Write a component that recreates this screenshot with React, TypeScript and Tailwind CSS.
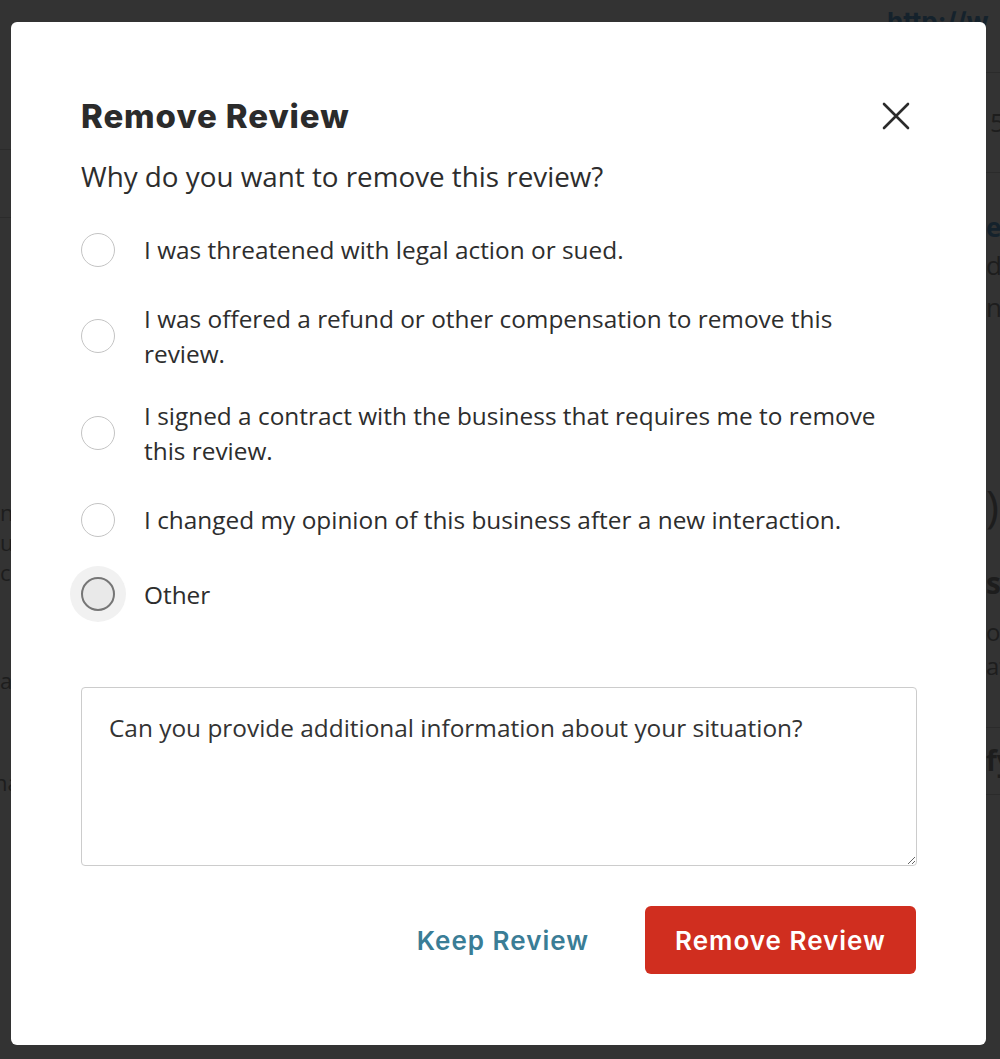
import React from "react";

const options: string[] = [
  "I was threatened with legal action or sued.",
  "I was offered a refund or other compensation to remove this review.",
  "I signed a contract with the business that requires me to remove this review.",
  "I changed my opinion of this business after a new interaction.",
];

const rowMargins = ["mt-0", "mt-[34px]", "mt-[27px]", "mt-[34px]"];

function Radio() {
  return (
    <span className="block w-[34px] h-[34px] shrink-0 rounded-full border-[1.5px] border-[#c4c4c4] bg-white" />
  );
}

function BackgroundPage() {
  return (
    <div className="flex justify-between h-full text-[#1d1d1d]">
      {/* left strip of the page behind */}
      <div className="w-[40px] flex flex-col">
        <div className="h-[150px] border-b border-[#2b2b2b]" />
        <div className="h-[68px] border-b border-[#2b2b2b]" />
        <div className="pt-[278px] flex flex-col text-[22px] leading-[32px]">
          <span>n</span>
          <span className="-mt-[2px]">u</span>
          <span className="-mt-[2px]">c</span>
          <span className="mt-[76px]">a</span>
          <span className="mt-[70px] -ml-[6px]">na</span>
        </div>
      </div>
      {/* right strip of the page behind */}
      <div className="w-[120px] flex flex-col">
        <div className="h-[73px] border-b border-[#2b2b2b] pl-[7px] pt-[2px]">
          <span className="text-[26px] font-bold text-[#15222c] [font-family:Inter,sans-serif] whitespace-nowrap">
            http://w
          </span>
        </div>
        <div className="h-[100px] border-b border-[#2b2b2b] pl-[110px] pt-[32px] text-[26px] leading-[34px]">5</div>
        <div className="pl-[106px] pt-[34px] flex flex-col text-[26px] leading-[40px]">
          <span className="font-bold text-[#15222c]">e</span>
          <span className="-mt-[2px]">d</span>
          <span className="mt-[2px]">ny</span>
          <span className="mt-[150px] text-[44px] leading-[56px]">)</span>
          <span className="mt-[30px] text-[30px] leading-[40px] font-bold">s</span>
          <span className="mt-[12px] text-[24px] leading-[34px]">o</span>
          <span className="text-[24px] leading-[34px]">at</span>
        </div>
        <div className="mt-[44px] h-[68px] border-y border-[#2b2b2b] pl-[106px] pt-[12px] text-[28px] font-bold leading-[40px]">
          fy
        </div>
      </div>
    </div>
  );
}

export default function App() {
  return (
    <div className="relative w-[1000px] h-[1059px] overflow-hidden bg-[#333333] [font-family:'Open_Sans',sans-serif]">
      <BackgroundPage />

      {/* dialog overlay */}
      <div className="absolute left-[11px] top-[22px] w-[975px] h-[1023px] rounded-[6px] bg-white pt-[74px] pl-[70px] pr-[70px] flex flex-col">
        <div className="flex items-center justify-between">
          <h2 className="text-[33px] leading-[40px] font-extrabold tracking-[0.9px] text-[#2b2b2b] [font-family:Inter,sans-serif]">
            Remove Review
          </h2>
          <button className="w-[30px] h-[30px] mr-[5px] flex items-center justify-center text-[#2b2b2b]" aria-label="Close">
            <svg width="28" height="28" viewBox="0 0 28 28" fill="none" stroke="currentColor" strokeWidth="2.6" strokeLinecap="round">
              <path d="M2 2L26 26M26 2L2 26" />
            </svg>
          </button>
        </div>

        <p className="mt-[24px] text-[27.8px] leading-[32px] text-[#2d2d2d]">
          Why do you want to remove this review?
        </p>

        <div className="mt-[40px] flex flex-col">
          {options.map((o, i) => (
            <label key={i} className={`flex items-center gap-[29px] ${rowMargins[i]}`}>
              <Radio />
              <span className="max-w-[750px] text-[24.4px] leading-[35px] text-[#2d2d2d]">{o}</span>
            </label>
          ))}
          <label className="flex items-center mt-[29px] -ml-[11px]">
            <span className="w-[56px] h-[56px] rounded-full bg-[#f1f1f1] flex items-center justify-center shrink-0">
              <span className="block w-[34px] h-[34px] rounded-full border-2 border-[#767676] bg-[#e9e9e9]" />
            </span>
            <span className="ml-[18px] text-[24.4px] leading-[35px] text-[#2d2d2d]">Other</span>
          </label>
        </div>

        <textarea
          className="mt-[65px] w-[836px] h-[179px] rounded-[4px] border-[1.5px] border-[#cccccc] pl-[27px] pt-[24px] pr-[20px] text-[24.4px] leading-[32px] text-[#2d2d2d] placeholder:text-[#333333] outline-none resize-y"
          placeholder="Can you provide additional information about your situation?"
        />

        <div className="mt-[40px] flex items-center justify-end gap-[56px] [font-family:Inter,sans-serif]">
          <button className="text-[26px] font-semibold text-[#3a7d96] tracking-[1px]">Keep Review</button>
          <button className="w-[271px] h-[68px] rounded-[6px] bg-[#d02e1f] text-white text-[26px] font-semibold tracking-[1px]">
            Remove Review
          </button>
        </div>
      </div>
    </div>
  );
}
